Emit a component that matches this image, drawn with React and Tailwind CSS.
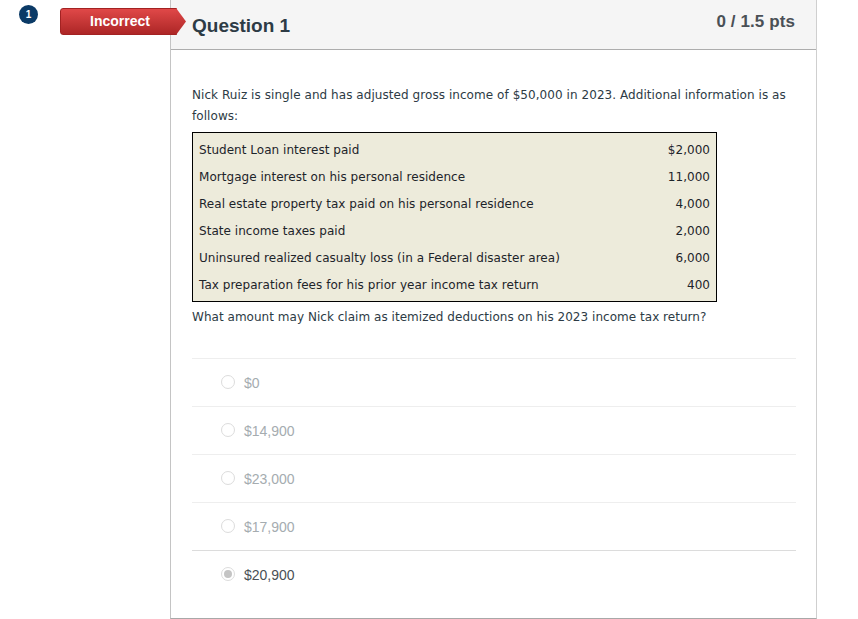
const ROWS = [
  ['Student Loan interest paid', '$2,000'],
  ['Mortgage interest on his personal residence', '11,000'],
  ['Real estate property tax paid on his personal residence', '4,000'],
  ['State income taxes paid', '2,000'],
  ['Uninsured realized casualty loss (in a Federal disaster area)', '6,000'],
  ['Tax preparation fees for his prior year income tax return', '400'],
];

const ANSWERS = [
  { label: '$0' },
  { label: '$14,900' },
  { label: '$23,000' },
  { label: '$17,900' },
  { label: '$20,900', selected: true },
];

function Radio({ selected }) {
  return (
    <span className="mt-[-2px] flex h-[14px] w-[14px] items-center justify-center rounded-full border border-[#dcdcdc] bg-white">
      {selected && <span className="h-[8px] w-[8px] rounded-full bg-[#c4c4c4]" />}
    </span>
  );
}

export default function App() {
  return (
    <div className="flex h-[619px] w-[858px] overflow-hidden bg-white font-['Liberation_Sans',sans-serif]">
      {/* Left gutter */}
      <div className="relative w-[170px] shrink-0">
        <div className="ml-[19px] mt-[5px] flex h-[19px] w-[19px] items-center justify-center rounded-full bg-[#0b3a66] text-[10px] font-bold text-white">
          1
        </div>
        <div className="absolute left-[60px] top-[8px] z-10 flex h-[27px] w-[117px] items-center justify-center rounded-l-[3px] border border-[#a32222] bg-gradient-to-b from-[#e04848] to-[#ad2626] pl-[3px] text-[14px] font-bold text-white">
          Incorrect
          <svg className="absolute left-[115px] top-[-1px]" width="11" height="27" viewBox="0 0 11 27">
            <defs>
              <linearGradient id="tip" x1="0" y1="0" x2="0" y2="1">
                <stop offset="0" stopColor="#e04848" />
                <stop offset="1" stopColor="#ad2626" />
              </linearGradient>
            </defs>
            <path d="M0 0 L10 13.5 L0 27 Z" fill="url(#tip)" />
          </svg>
        </div>
      </div>

      {/* Question card */}
      <div className="flex h-[619px] w-[647px] shrink-0 flex-col border-b border-l border-r border-b-[#a8a8a8] border-l-[#c4c4c4] border-r-[#cfcfcf]">
        <div className="flex h-[50px] shrink-0 justify-between border-b border-[#adadad] bg-[#f5f5f5] pl-[21px] pr-[21px] text-[#2d3b45]">
          <h2 className="mt-[14px] text-[19px] font-bold leading-[24px]">Question 1</h2>
          <div className="mt-[11px] text-[17px] font-bold leading-[22px] tracking-[0.1px] text-[#4a5056]">0 / 1.5 pts</div>
        </div>

        <div className="pl-[21px] pr-[20px] pt-[34px] font-['DejaVu_Sans',sans-serif] text-[12px] leading-[21px] text-[#2d3b45]">
          <p className="mt-[1px] w-[600px] tracking-[0.06px]">
            Nick Ruiz is single and has adjusted gross income of $50,000 in 2023. Additional information is as follows:
          </p>
          <div className="mt-[5px] w-[525px] border border-black bg-[#edebdb] pb-[2px] pt-[4px] text-[#1d242a]">
            <table className="w-full border-collapse tracking-[0.035px]">
              <tbody>
                {ROWS.map(([name, amount], i) => (
                  <tr key={i} className="h-[27px]">
                    <td className="pl-[6px]">{name}</td>
                    <td className="pr-[6px] text-right">{amount}</td>
                  </tr>
                ))}
              </tbody>
            </table>
          </div>
          <p className="mt-[5px] tracking-[0.03px]">What amount may Nick claim as itemized deductions on his 2023 income tax return?</p>

          <ul className="mt-[30px] border-t border-[#eeeeee] font-['Liberation_Sans',sans-serif] text-[14px]">
            {ANSWERS.map((a, i) => (
              <li
                key={a.label}
                className={`flex items-center pl-[29px] ${i < 4 ? 'h-[48px] border-b' : 'h-[47px]'} ${i === 3 ? 'border-[#dcdcdc]' : 'border-[#eeeeee]'}`}
              >
                <Radio selected={a.selected} />
                <span className={`ml-[9px] mt-[2px] ${a.selected ? 'text-[#4a5056]' : 'text-[#a5acb0]'}`}>{a.label}</span>
              </li>
            ))}
          </ul>
        </div>
      </div>
    </div>
  );
}
